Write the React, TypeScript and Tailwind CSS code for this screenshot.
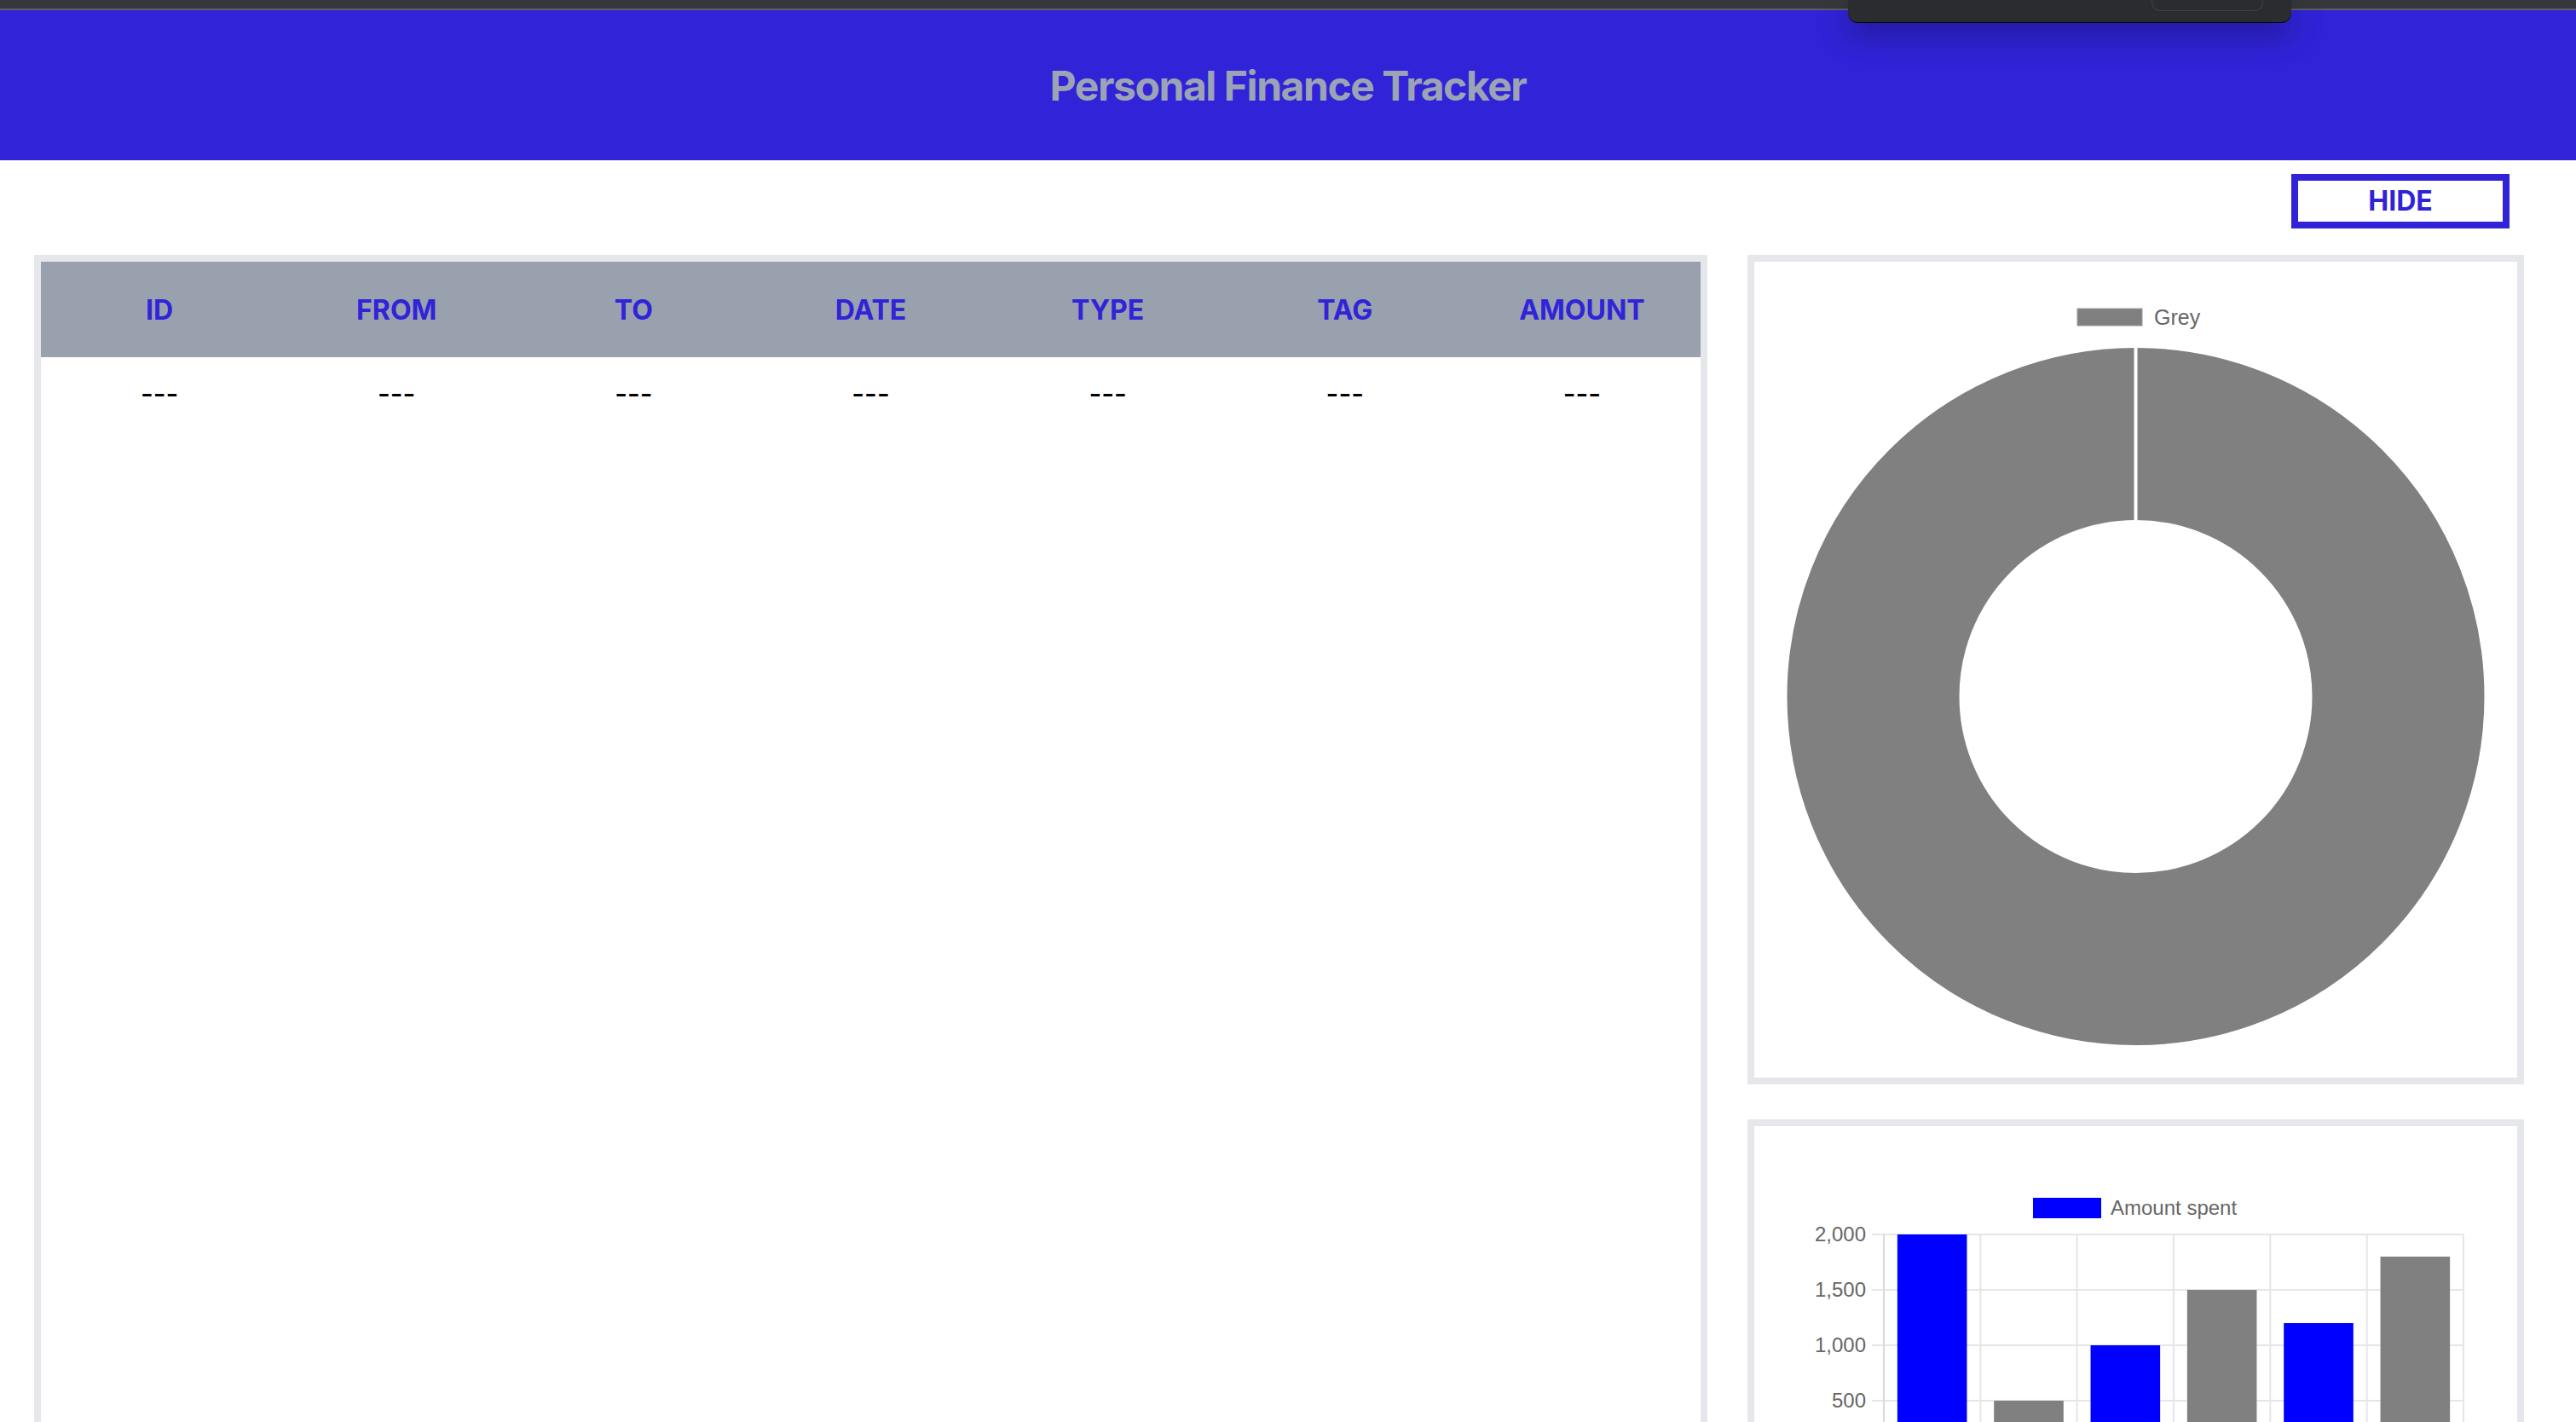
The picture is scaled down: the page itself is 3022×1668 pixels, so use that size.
const COLUMNS = ["ID", "FROM", "TO", "DATE", "TYPE", "TAG", "AMOUNT"];

const BARS = [
  { value: 2000, color: "#0000ff" },
  { value: 500, color: "#808080" },
  { value: 1000, color: "#0000ff" },
  { value: 1500, color: "#808080" },
  { value: 1200, color: "#0000ff" },
  { value: 1800, color: "#808080" },
];

// Donut with a single grey slice; the white tick is the slice border.
function DonutChart() {
  const cx = 447.5;
  const cy = 510;
  const outer = 409;
  const inner = 207;
  return (
    <svg width="895" height="957" className="block">
      <rect x="379" y="55" width="76" height="20" fill="#808080" stroke="#9a9a9a" strokeWidth="1" />
      <text x="469" y="74" fontSize="25" fill="#666" fontFamily="'Liberation Sans', Arial, sans-serif">
        Grey
      </text>
      <circle cx={cx} cy={cy} r={(outer + inner) / 2} fill="none" stroke="#808080" strokeWidth={outer - inner} />
      <line x1={cx} y1={cy - outer} x2={cx} y2={cy - inner} stroke="#fff" strokeWidth="4" />
    </svg>
  );
}

function BarChart() {
  const left = 152;
  const right = 832;
  const zeroY = 387;
  const perUnit = 65 / 500;
  const step = (right - left) / BARS.length;
  const barW = step * 0.72;
  const ticks = [2000, 1500, 1000, 500, 0];
  return (
    <svg width="895" height="520" className="block" fontFamily="'Liberation Sans', Arial, sans-serif">
      <rect x="327" y="84" width="80" height="24" fill="#0000ff" />
      <text x="418" y="104" fontSize="24" fill="#666">
        Amount spent
      </text>
      {ticks.map((t) => {
        const y = zeroY - t * perUnit;
        return (
          <g key={t}>
            <line x1={left - 14} y1={y} x2={right} y2={y} stroke="#e6e6e6" strokeWidth="2" />
            <text x="131" y={y + 8} fontSize="24" fill="#666" textAnchor="end">
              {t.toLocaleString("en-US")}
            </text>
          </g>
        );
      })}
      {BARS.map((_, i) => (
        <line
          key={i}
          x1={left + step * (i + 1)}
          y1={zeroY - 2000 * perUnit}
          x2={left + step * (i + 1)}
          y2={zeroY + 14}
          stroke="#e6e6e6"
          strokeWidth="2"
        />
      ))}
      <line x1={left} y1={zeroY - 2000 * perUnit} x2={left} y2={zeroY + 14} stroke="#d9d9d9" strokeWidth="2" />
      {BARS.map((b, i) => {
        const x = left + step * i + (step - barW) / 2;
        const y = zeroY - b.value * perUnit;
        return <rect key={i} x={x} y={y} width={barW} height={zeroY - y} fill={b.color} />;
      })}
    </svg>
  );
}

export default function App() {
  return (
    <div className="relative min-h-screen bg-white font-['Inter','Noto_Sans',sans-serif]">
      {/* browser chrome strip + floating panel */}
      <div className="h-[10px] bg-[#36373b]" />
      <div className="h-[2px] bg-[#5e5f63]" />
      <div className="absolute left-[2168px] top-0 h-[27px] w-[520px] rounded-b-[12px] border-b border-black bg-[#2b2c2f] shadow-[0_12px_36px_rgba(0,0,0,0.35)]">
        <div className="absolute left-[356px] top-0 h-[13px] w-[131px] rounded-b-[10px] border border-t-0 border-[#404145]" />
      </div>

      <header className="flex h-[176px] items-center justify-center bg-[#3023d8]">
        <h1 className="pt-[2px] text-[48px] font-bold tracking-[-0.03em] text-[#9ca3b5]">Personal Finance Tracker</h1>
      </header>

      <div className="flex justify-end pr-[78px] pt-[16px]">
        <button className="flex h-[64px] w-[256px] items-center justify-center border-8 border-[#3023d8] bg-white text-[32px] font-bold text-[#3023d8]">
          HIDE
        </button>
      </div>

      <div className="mt-[31px] flex items-start gap-[47px] pl-[40px]">
        <div className="h-[1500px] w-[1963px] border-8 border-gray-200">
          <table className="w-full table-fixed border-collapse">
            <thead>
              <tr className="h-[112px] bg-gray-400">
                {COLUMNS.map((c) => (
                  <th key={c} className="pt-[2px] text-center text-[32px] font-bold text-[#3023d8]">
                    {c}
                  </th>
                ))}
              </tr>
            </thead>
            <tbody>
              <tr className="h-[86px]">
                {COLUMNS.map((c) => (
                  <td key={c} className="text-center text-[32px] font-medium text-black">
                    ---
                  </td>
                ))}
              </tr>
            </tbody>
          </table>
        </div>

        <div className="flex w-[911px] flex-col gap-[41px]">
          <div className="border-8 border-gray-200">
            <DonutChart />
          </div>
          <div className="border-8 border-gray-200">
            <BarChart />
          </div>
        </div>
      </div>
    </div>
  );
}
